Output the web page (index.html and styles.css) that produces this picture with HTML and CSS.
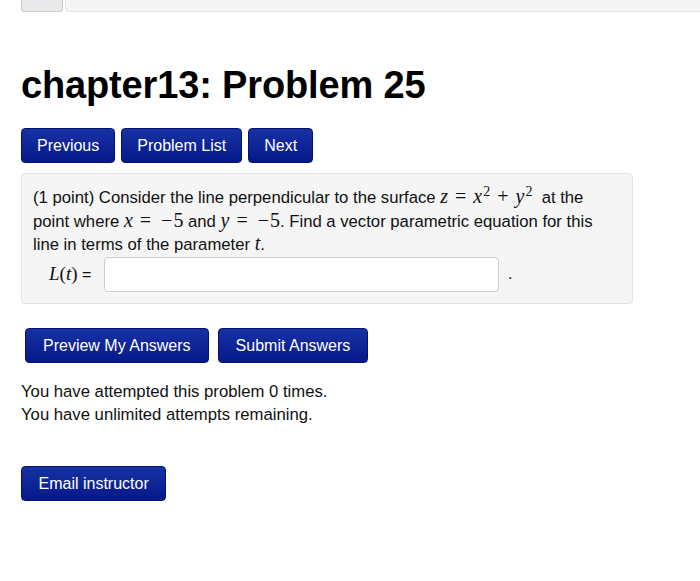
FILE: index.html
```html
<!DOCTYPE html>
<html>
<head>
<meta charset="utf-8">
<link rel="stylesheet" href="styles.css">
</head>
<body>
<div class="topbar">
  <div class="toptab"></div>
  <div class="topstrip"></div>
</div>
<div class="page">
  <h1 class="title">chapter13: Problem 25</h1>
  <div class="nav">
    <a class="btn">Previous</a>
    <a class="btn">Problem List</a>
    <a class="btn">Next</a>
  </div>
  <div class="problem">
    <div class="ptext">(1 point) Consider the line perpendicular to the surface <span class="math"><span class="m">z</span><span class="op">=</span><span class="m">x</span><sup class="sup">2</sup><span class="op">+</span><span class="m">y</span><sup class="sup">2</sup></span>&nbsp; at the<br>point where <span class="math"><span class="m">x</span><span class="op">=</span><span class="n"><span class="minus">−</span>5</span></span> and <span class="math"><span class="m">y</span><span class="op">=</span><span class="n"><span class="minus">−</span>5</span></span>. Find a vector parametric equation for this<br>line in terms of the parameter <span class="math"><span class="m">t</span></span>.</div>
    <div class="answer">
      <span class="label"><span class="m">L</span><span class="n">(</span><span class="m">t</span><span class="n">)</span> =</span>
      <span class="input"></span>
      <span class="dot">.</span>
    </div>
  </div>
  <div class="actions">
    <a class="btn btn-act">Preview My Answers</a>
    <a class="btn btn-act">Submit Answers</a>
  </div>
  <div class="attempts">You have attempted this problem 0 times.<br>You have unlimited attempts remaining.</div>
  <div class="email">
    <a class="btn btn-mail">Email instructor</a>
  </div>
</div>
</body>
</html>
```
FILE: styles.css
```css
html, body {
  margin: 0;
  padding: 0;
  background: #ffffff;
}
body {
  font-family: "Liberation Sans", Arial, Helvetica, sans-serif;
  color: #111111;
  font-size: 16.7px;
}
.topbar {
  display: flex;
  height: 12px;
  padding-left: 21px;
  gap: 2px;
}
.toptab {
  width: 40px;
  height: 11px;
  background: #e9e9eb;
  border: 1px solid #c9c9c9;
  border-top: none;
  border-radius: 0 0 4px 4px;
}
.topstrip {
  flex: 1;
  height: 11px;
  background: #f5f5f5;
  border: 1px solid #e5e5e5;
  border-top: none;
  border-right: none;
  border-radius: 0 0 0 4px;
}
.page {
  padding-left: 21px;
}
.title {
  margin: 51px 0 0 0;
  font-size: 38px;
  line-height: 44px;
  font-weight: bold;
  color: #000000;
  letter-spacing: -0.15px;
}
.nav {
  display: flex;
  gap: 6px;
  margin-top: 21px;
}
.btn {
  display: inline-block;
  background: linear-gradient(to bottom, #1732a3, #06188a);
  color: #ffffff;
  font-size: 16px;
  line-height: 19px;
  padding: 7px 15px;
  border: 1px solid #04136e;
  border-radius: 4px;
  white-space: nowrap;
}
.btn-act {
  padding-left: 17px;
  padding-right: 17px;
}
.btn-mail {
  padding-left: 16.5px;
  padding-right: 16.5px;
}
.problem {
  margin-top: 10px;
  width: 588px;
  background: #f5f5f5;
  border: 1px solid #e3e3e3;
  border-radius: 4px;
  padding: 12px 11px 11px 11px;
}
.ptext {
  line-height: 23.5px;
}
.math {
  white-space: nowrap;
  line-height: 0;
}
.m {
  font-family: "Liberation Serif", "Times New Roman", serif;
  font-style: italic;
  font-size: 20px;
  line-height: 0;
}
.n {
  font-family: "Liberation Serif", "Times New Roman", serif;
  font-size: 20px;
  line-height: 0;
}
.minus {
  margin-left: 3px;
  margin-right: 1px;
}
.op {
  font-family: "Liberation Serif", "Times New Roman", serif;
  font-size: 20px;
  line-height: 0;
  margin: 0 7px;
}
.sup {
  font-family: "Liberation Serif", "Times New Roman", serif;
  font-size: 14px;
  line-height: 0;
  vertical-align: 7px;
  margin-left: 1px;
}
.answer {
  display: flex;
  align-items: center;
  padding-left: 16px;
}
.label {
  font-size: 16px;
  width: 55px;
}
.label .m, .label .n {
  font-size: 19px;
  line-height: 1;
}
.input {
  display: block;
  width: 393px;
  height: 33px;
  background: #ffffff;
  border: 1px solid #cccccc;
  border-radius: 4px;
}
.dot {
  margin-left: 9px;
  font-size: 16px;
}
.actions {
  display: flex;
  gap: 9px;
  margin-top: 24px;
  padding-left: 4px;
}
.attempts {
  margin-top: 17px;
  line-height: 23px;
}
.email {
  display: flex;
  margin-top: 40px;
}
```
